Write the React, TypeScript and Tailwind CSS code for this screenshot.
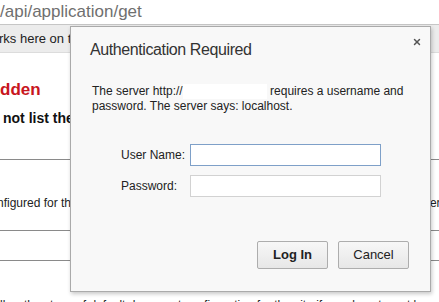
import { X } from 'lucide-react';

const font = { fontFamily: '"Liberation Sans", Arial, sans-serif' };

function DialogButton({ label, bold }: { label: string; bold?: boolean }) {
  return (
    <button
      type="button"
      className={`h-[28px] w-[71px] rounded-[2px] border border-[#adadad] bg-gradient-to-b from-[#f7f7f7] to-[#e7e7e7] text-[13px] text-[#222] ${bold ? 'font-bold' : ''}`}
    >
      {label}
    </button>
  );
}

function AuthDialog() {
  return (
    <div className="absolute left-[70px] top-[26px] h-[266px] w-[361px] border border-[#aaaaaa] bg-[#f8f8f8] shadow-[1px_2px_4px_rgba(0,0,0,0.22)]">
      <X className="absolute left-[341px] top-[10px] h-[10px] w-[10px] text-[#555]" strokeWidth={3.5} />
      <h1 className="pl-[19px] pt-[13px] text-[16px] leading-[20px] tracking-[-0.4px] text-[#333]">Authentication Required</h1>

      <p className="mt-[24px] pl-[21px] text-[12px] leading-[15px] text-[#222]">
        The server http://
        <span className="inline-block h-[15px] w-[84px] bg-white align-top" />
        {' '}requires a username and
        <br />
        password. The server says: localhost.
      </p>

      <div className="mt-[30px] grid grid-cols-[69px_191px] items-center gap-y-[9px] pl-[50px] text-[12px] text-[#222]">
        <label>User Name:</label>
        <input className="h-[22px] border border-[#7ea0c8] bg-white outline-none" defaultValue="" />
        <label>Password:</label>
        <input type="password" className="h-[22px] border border-[#d2d2d2] bg-white outline-none" defaultValue="" />
      </div>

      <div className="mt-[44px] flex justify-end gap-[10px] pr-[21px]">
        <DialogButton label="Log In" bold />
        <DialogButton label="Cancel" />
      </div>
    </div>
  );
}

export default function App() {
  return (
    <div className="relative h-[302px] w-[439px] overflow-hidden bg-white" style={font}>
      <div className="flex h-[24px] items-center whitespace-nowrap text-[17px] text-[#6f6f6f]">/api/application/get</div>

      <div className="flex h-[29px] items-center whitespace-nowrap border-t border-b border-t-[#c6c6c6] border-b-[#dcdcdc] bg-[#ececec] text-[13px] text-[#222]">
        <span className="-ml-[1px]">rks here on the bookmarks bar.</span>
      </div>

      <div className="whitespace-nowrap">
        <div className="mt-[27px] text-[17px] font-bold leading-[20px] text-[#c8161d]">dden</div>
        <div className="ml-[3px] mt-[10px] text-[14px] font-bold leading-[17px] text-[#111]">not list the contents of this directory.</div>
        <div className="mt-[32px] border-t border-[#8a8a8a]" />
        <div className="-ml-[3px] mt-[36px] text-[12px] leading-[15px] text-[#222]">
          nfigured for the requested URL, and directory browsing is not enabled on the server.
        </div>
        <div className="mt-[19px] border-t border-[#8a8a8a]" />
        <div className="mt-[29px] border-t border-[#8a8a8a]" />
        <div className="mt-[37px] text-[12px] leading-[15px] text-[#222]">
          llow the steps of default document configuration for the site if you do not want browsing
        </div>
      </div>

      <AuthDialog />
    </div>
  );
}
